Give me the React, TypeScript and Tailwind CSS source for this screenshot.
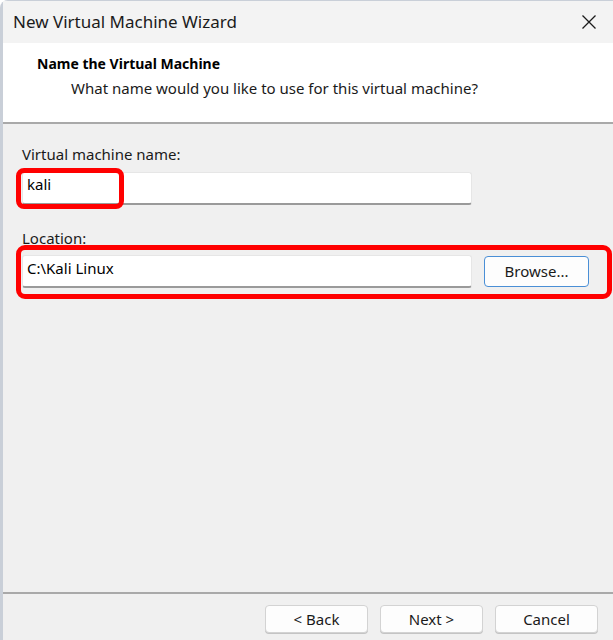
import React from "react";

const font = { fontFamily: '"Segoe UI", "Noto Sans", sans-serif' };

function Btn({ children, focused }: { children: React.ReactNode; focused?: boolean }) {
  return (
    <button
      className={
        focused
          ? "h-[31px] w-[105px] rounded-[4px] border-[1.5px] border-[#4a8fd6] bg-[#fdfdfd] text-[15px] text-[#1a1a1a]"
          : "h-[28px] w-[103px] rounded-[4px] border border-[#d3d3d3] bg-[#fdfdfd] text-[15px] text-[#1a1a1a] shadow-[0_1px_0_#c4c4c4]"
      }
    >
      {children}
    </button>
  );
}

export default function App() {
  return (
    <div className="relative h-[640px] w-[613px] overflow-hidden bg-white" style={font}>
      <div className="flex h-full flex-col rounded-tl-[8px] border-l-[3px] border-t border-[#c9cfd8] bg-[#f0f0f0]">
        {/* title bar */}
        <div className="flex h-[42px] items-center justify-between bg-[#f3f3f3] pl-[10px] pr-[14px]">
          <span className="text-[17px] text-[#1b1b1b]">New Virtual Machine Wizard</span>
          <svg width="16" height="16" viewBox="0 0 16 16" className="mr-[2px]">
            <path d="M1.5 1.5 L14.5 14.5 M14.5 1.5 L1.5 14.5" stroke="#1b1b1b" strokeWidth="1.3" />
          </svg>
        </div>
        {/* header */}
        <div className="h-[81px] border-b-2 border-[#a9a9a9] bg-white pl-[34px] pt-[11px]">
          <div className="text-[14px] font-bold leading-[20px] text-black">Name the Virtual Machine</div>
          <div className="mt-[4px] pl-[34px] text-[15px] leading-[20px] text-[#1a1a1a]">
            What name would you like to use for this virtual machine?
          </div>
        </div>
        {/* content */}
        <div className="flex-1 pl-[19px] pt-[20px]">
          <div className="text-[15px] leading-[20px] text-[#1a1a1a]">Virtual machine name:</div>
          <div className="mt-[8px] h-[33px] w-[450px] rounded-[3px] border border-b-2 border-[#e6e6e6] border-b-[#9a9a9a] bg-white pl-[4px] pt-[1px] text-[15px] leading-[20px] text-black">
            kali
          </div>
          <div className="mt-[23px] text-[15px] leading-[20px] text-[#1a1a1a]">Location:</div>
          <div className="mt-[7px] flex items-center gap-[12px]">
            <div className="h-[33px] w-[450px] rounded-[3px] border border-b-2 border-[#e6e6e6] border-b-[#9a9a9a] bg-white pl-[4px] pt-[2px] text-[15px] leading-[20px] text-black">
              C:\Kali Linux
            </div>
            <Btn focused>Browse...</Btn>
          </div>
        </div>
        {/* footer */}
        <div className="h-[48px] border-t-2 border-[#a9a9a9]">
          <div className="flex justify-end gap-[12px] pr-[15px] pt-[11px]">
            <Btn>&lt; Back</Btn>
            <Btn>Next &gt;</Btn>
            <Btn>Cancel</Btn>
          </div>
        </div>
      </div>
      {/* annotation boxes */}
      <div className="pointer-events-none absolute left-[16px] top-[168px] h-[41px] w-[108px] rounded-[8px] border-[5px] border-[#ff0000]" />
      <div className="pointer-events-none absolute left-[16px] top-[245px] h-[54px] w-[596px] rounded-[9px] border-[5px] border-[#ff0000]" />
    </div>
  );
}
